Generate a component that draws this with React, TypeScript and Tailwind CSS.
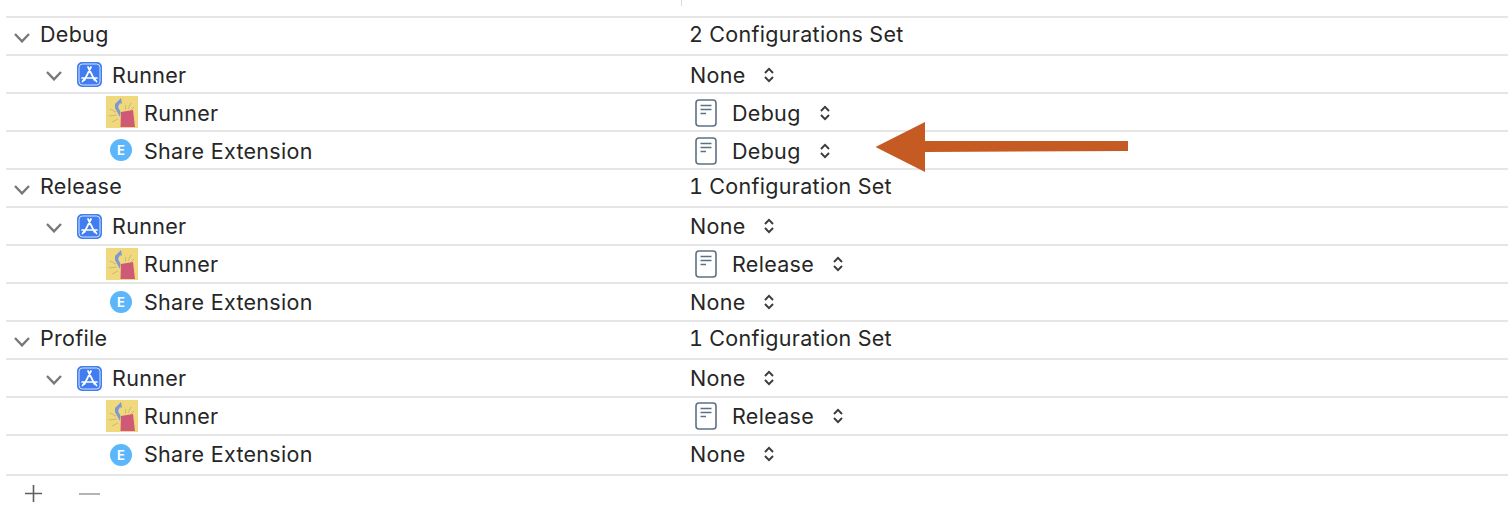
import React from "react"

type RowKind = "group" | "target" | "runner" | "ext"

type RowData = {
    kind: RowKind
    label: string
    value: string
    doc?: boolean
}

const rows: RowData[] = [
    { kind: "group", label: "Debug", value: "2 Configurations Set" },
    { kind: "target", label: "Runner", value: "None" },
    { kind: "runner", label: "Runner", value: "Debug", doc: true },
    { kind: "ext", label: "Share Extension", value: "Debug", doc: true },
    { kind: "group", label: "Release", value: "1 Configuration Set" },
    { kind: "target", label: "Runner", value: "None" },
    { kind: "runner", label: "Runner", value: "Release", doc: true },
    { kind: "ext", label: "Share Extension", value: "None" },
    { kind: "group", label: "Profile", value: "1 Configuration Set" },
    { kind: "target", label: "Runner", value: "None" },
    { kind: "runner", label: "Runner", value: "Release", doc: true },
    { kind: "ext", label: "Share Extension", value: "None" },
]

function Chevron() {
    return (
        <svg width="16" height="10" viewBox="0 0 16 10" className="shrink-0 mt-[3px]">
            <path d="M1 1 L8 8.4 L15 1" stroke="#77777a" strokeWidth="2.3" fill="none" />
        </svg>
    )
}

function AppStoreIcon() {
    return (
        <svg width="25" height="25" viewBox="0 0 25 25" className="shrink-0">
            <rect width="25" height="25" rx="5" fill="#3f7df0" />
            <rect x="2" y="2" width="21" height="21" rx="3.5" fill="none" stroke="#d5e3fb" strokeWidth="1" />
            <path d="M11 5 L17.5 18 M14 5 L7.5 18 M5 16 H20 M5.5 19.5 L7 17.5 M19.5 19.5 L18 17.5" stroke="#fff" strokeWidth="1.7" strokeLinecap="round" fill="none" />
        </svg>
    )
}

function RunnerIcon() {
    return (
        <svg width="32" height="32" viewBox="0 0 32 32" className="shrink-0">
            <rect width="32" height="32" fill="#f0d87c" />
            <path d="M4 13 L10 16 M3 20 L11 19 M6 26 L12 23 M20 9 L19 14 M25 7 L22 13 M28 11 L25 14" stroke="#c3b67c" strokeWidth="0.9" fill="none" />
            <path d="M15 2 L9 8 L9 12 L14 21 L14.5 16 L12 11 L14 7 L16 8 Z" fill="#7b97d4" />
            <path d="M15 16 L27 14 L29 31 H14.5 Z" fill="#cf5a78" />
        </svg>
    )
}

function ExtensionIcon() {
    return (
        <div className="w-[22px] h-[22px] rounded-full bg-[#5cb6fb] flex items-center justify-center text-white text-[13px] font-bold leading-none tracking-normal shrink-0">E</div>
    )
}

function DocIcon() {
    return (
        <svg width="22" height="28" viewBox="0 0 22 28" className="shrink-0">
            <rect x="1" y="1" width="20" height="26" rx="3" fill="#fff" stroke="#5d7184" strokeWidth="1.6" />
            <path d="M5.5 6.5 H16.5 M5.5 10.5 H16.5 M5.5 14.5 H11" stroke="#5d7184" strokeWidth="1.4" />
        </svg>
    )
}

function UpDown() {
    return (
        <svg width="12" height="16" viewBox="0 0 12 16" className="shrink-0">
            <path d="M2 6 L6 1.8 L10 6 M2 10 L6 14.2 L10 10" stroke="#3a3a3c" strokeWidth="1.9" fill="none" />
        </svg>
    )
}

function Row({ row, index }: { row: RowData; index: number }) {
    const { kind, label, value, doc } = row
    // the table is not quite even: first section sits a bit lower, last row is taller
    const shift = kind === "group" ? "pb-[4px]" : index === 11 ? "pb-[2px]" : index < 4 ? "pt-[2px]" : ""
    const rowHeight = index === 11 ? "h-[40px]" : "h-[38px]"
    return (
        <div className={`flex ${rowHeight} border-b-2 border-[#e6e6e6] items-center text-[#262626]`}>
            <div className="w-[683px] flex items-center shrink-0">
                {kind === "group" && (
                    <div className="flex items-center pl-[8px]">
                        <Chevron />
                        <span className={`ml-[10px] ${shift}`}>{label}</span>
                    </div>
                )}
                {kind === "target" && (
                    <div className="flex items-center pl-[40px]">
                        <Chevron />
                        <div className="ml-[15px]"><AppStoreIcon /></div>
                        <span className={`ml-[10px] ${shift}`}>{label}</span>
                    </div>
                )}
                {kind === "runner" && (
                    <div className="flex items-center pl-[100px]">
                        <RunnerIcon />
                        <span className={`ml-[6px] ${shift}`}>{label}</span>
                    </div>
                )}
                {kind === "ext" && (
                    <div className="flex items-center pl-[104px]">
                        <ExtensionIcon />
                        <span className={`ml-[12px] ${shift}`}>{label}</span>
                    </div>
                )}
            </div>
            {kind === "group" ? (
                <span className={`tabular-nums ${shift}`}>{value}</span>
            ) : doc ? (
                <div className={`flex items-center pl-[6px] ${shift}`}>
                    <DocIcon />
                    <span className="ml-[15px]">{value}</span>
                    <div className="ml-[18px]"><UpDown /></div>
                </div>
            ) : (
                <div className={`flex items-center pl-[1px] ${shift}`}>
                    <span>{value}</span>
                    <div className="ml-[17px]"><UpDown /></div>
                </div>
            )}
        </div>
    )
}

export default function App(): React.JSX.Element {
    return (
        <div className="relative w-[1508px] h-[530px] bg-white overflow-hidden font-['Inter','Liberation_Sans',sans-serif] text-[21.5px] tracking-[0.3px]">
            <div className="pl-[6px]">
                <div className="h-[18px] border-b-2 border-[#e6e6e6] relative">
                    <div className="absolute left-[675px] top-0 w-[1px] h-[6px] bg-[#dcdcdc]" />
                </div>
                {rows.map((row, i) => (
                    <Row key={i} row={row} index={i} />
                ))}
            </div>
            <div className="flex items-center pl-[24px] pt-[8px] gap-[36px]">
                <svg width="19" height="19" viewBox="0 0 19 19">
                    <path d="M9.5 1 V18 M1 9.5 H18" stroke="#5f5f5f" strokeWidth="1.6" />
                </svg>
                <div className="w-[21px] h-[2px] bg-[#b4b4b4]" />
            </div>
            <svg className="absolute left-[870px] top-[118px]" width="265" height="58" viewBox="0 0 265 58">
                <path d="M5.5 29 L55 4 V23 L258 23 V33 L55 34 V54 Z" fill="#c55a22" />
            </svg>
        </div>
    )
}
